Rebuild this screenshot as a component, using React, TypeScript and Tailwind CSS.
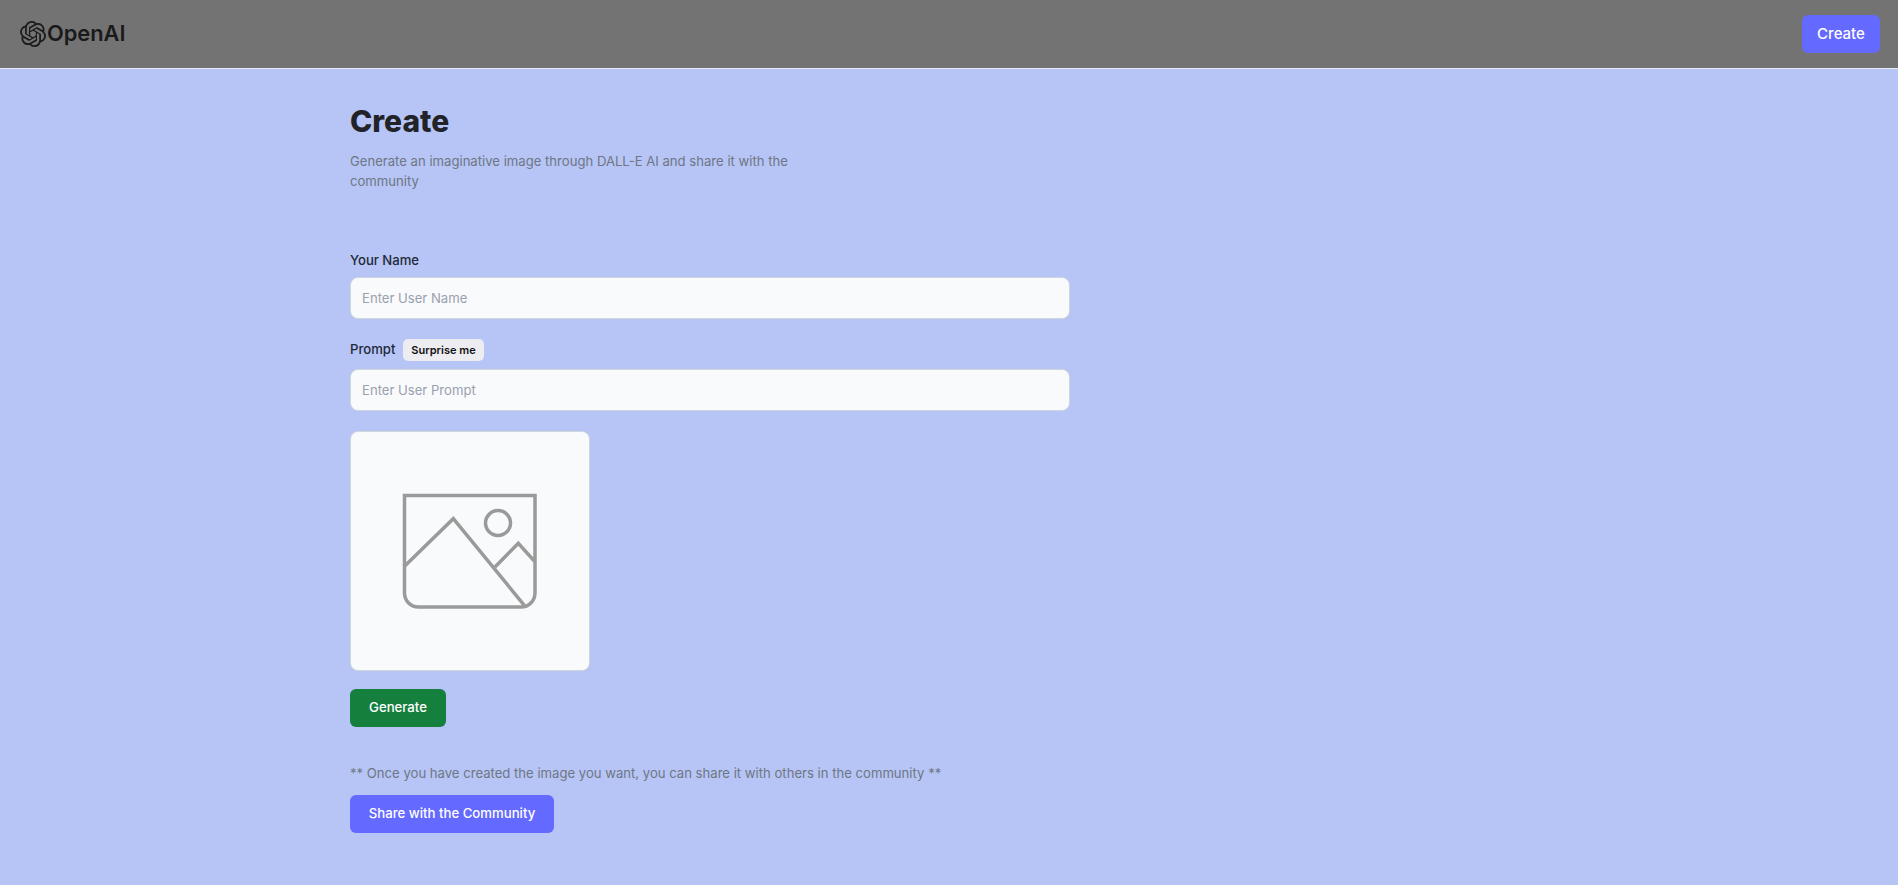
import { SiOpenai } from "react-icons/si"

function PreviewIcon() {
    return (
        <svg width="140" height="120" viewBox="0 0 140 120" fill="none" stroke="#9a9a9a" strokeWidth="3.5">
            <path d="M4.5 4.5H135V102a14 14 0 0 1-14 14H18.5a14 14 0 0 1-14-14Z" />
            <path d="M4 75.7 53.3 27.7 124.3 114.3" />
            <path d="M95 76 118.3 52.3 134.3 70" />
            <circle cx="98" cy="32" r="12.5" />
        </svg>
    )
}

function Field({ placeholder }: { placeholder: string }) {
    return (
        <input
            type="text"
            placeholder={placeholder}
            className="w-full h-[42px] px-[11px] rounded-lg bg-gray-50 border border-gray-300 text-[13.12px] text-gray-900 placeholder:text-gray-400 outline-none"
        />
    )
}

export default function App() {
    return (
        <div className="min-h-[885px] bg-[#b6c5f5] font-['Inter',sans-serif]">
            <header className="h-[69px] flex items-center justify-between pl-5 pr-[18px] bg-[#737373] border-b border-[#e6ebf4]">
                <a className="flex items-center gap-px text-[#1a1a1a]">
                    <SiOpenai size={26} />
                    <span className="text-[21.8px] leading-none font-semibold">OpenAI</span>
                </a>
                <button className="h-[38px] w-[78px] rounded-md bg-[#6469ff] text-white text-[15px] font-medium">Create</button>
            </header>

            <main className="pl-[350px] pt-[30px]">
                <h1 className="text-[30px] leading-[44px] font-extrabold text-[#222328]">Create</h1>
                <p className="mt-2 w-[480px] text-[13.12px] leading-5 text-[#6f7684]">
                    Generate an imaginative image through DALL-E AI and share it with the community
                </p>

                <form className="mt-[59px] w-[720px]">
                    <label className="block mb-[7px] text-[13.12px] leading-5 font-medium text-gray-800">Your Name</label>
                    <Field placeholder="Enter User Name" />

                    <div className="flex items-center gap-2 mt-5 mb-2 h-[22px]">
                        <label className="text-[13.12px] font-medium text-gray-800">Prompt</label>
                        <button type="button" className="h-[22px] px-2 rounded-[5px] bg-[#ececf1] text-[11px] font-semibold text-[#111111]">
                            Surprise me
                        </button>
                    </div>
                    <Field placeholder="Enter User Prompt" />

                    <div className="mt-5 w-[240px] h-[240px] flex items-center justify-center rounded-lg bg-gray-50 border border-gray-300">
                        <PreviewIcon />
                    </div>

                    <button type="button" className="block mt-[18px] w-[96px] h-[38px] rounded-md bg-[#15803d] text-white text-[13.2px] font-medium">
                        Generate
                    </button>

                    <p className="mt-[36px] text-[13.12px] leading-5 text-[#6f7684] whitespace-nowrap">
                        ** Once you have created the image you want, you can share it with others in the community **
                    </p>
                    <button type="button" className="block mt-3 w-[204px] h-[38px] rounded-md bg-[#6469ff] text-white text-[13.2px] font-medium">
                        Share with the Community
                    </button>
                </form>
            </main>
        </div>
    )
}
